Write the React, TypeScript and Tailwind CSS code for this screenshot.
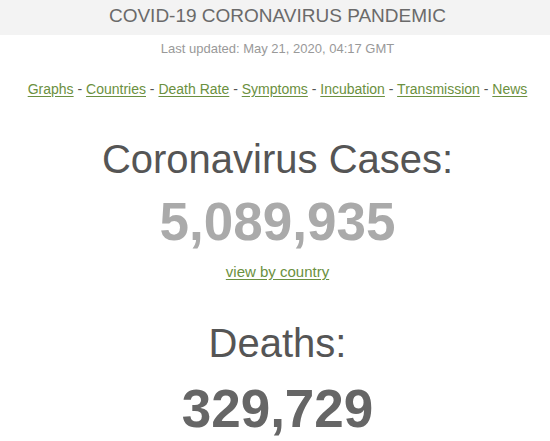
const links = ["Graphs", "Countries", "Death Rate", "Symptoms", "Incubation", "Transmission", "News"]

function Counter({ label, value, valueClass }: { label: string; value: string; valueClass: string }) {
  return (
    <>
      <h1 className="text-[40px] leading-[40px] font-normal text-[#555]">{label}</h1>
      <div className={`text-[53px] leading-[53px] font-bold ${valueClass}`}>{value}</div>
    </>
  )
}

export default function App() {
  return (
    <div className="w-[550px] h-[441px] overflow-hidden bg-white text-center font-['Liberation_Sans',Arial,sans-serif]">
      {/* page header */}
      <div className="h-[35px] bg-[#f3f3f3] pt-[6px] pl-[5px]">
        <div className="text-[19px] leading-[19px] text-[#6a6a6a]">COVID-19 CORONAVIRUS PANDEMIC</div>
      </div>

      <div className="pl-[5px]">
        <div className="mt-[7px] text-[13px] leading-[13px] text-[#999]">Last updated: May 21, 2020, 04:17 GMT</div>

        {/* section links */}
        <div className="mt-[27px] text-[14px] leading-[14px] text-[#555]">
          {links.map((l, i) => (
            <span key={l}>
              {i > 0 && " - "}
              <a href="#" className="text-[#6b9040] underline underline-offset-2">
                {l}
              </a>
            </span>
          ))}
        </div>

        <div className="mt-[43px] flex flex-col items-center">
          <Counter label="Coronavirus Cases:" value="5,089,935" valueClass="mt-[16px] text-[#aaa]" />
          <a href="#" className="mt-[16px] text-[15px] leading-[15px] text-[#6b9040] underline underline-offset-2">
            view by country
          </a>
        </div>

        <div className="mt-[44px] flex flex-col items-center">
          <Counter label="Deaths:" value="329,729" valueClass="mt-[19px] text-[#666]" />
        </div>
      </div>
    </div>
  )
}
